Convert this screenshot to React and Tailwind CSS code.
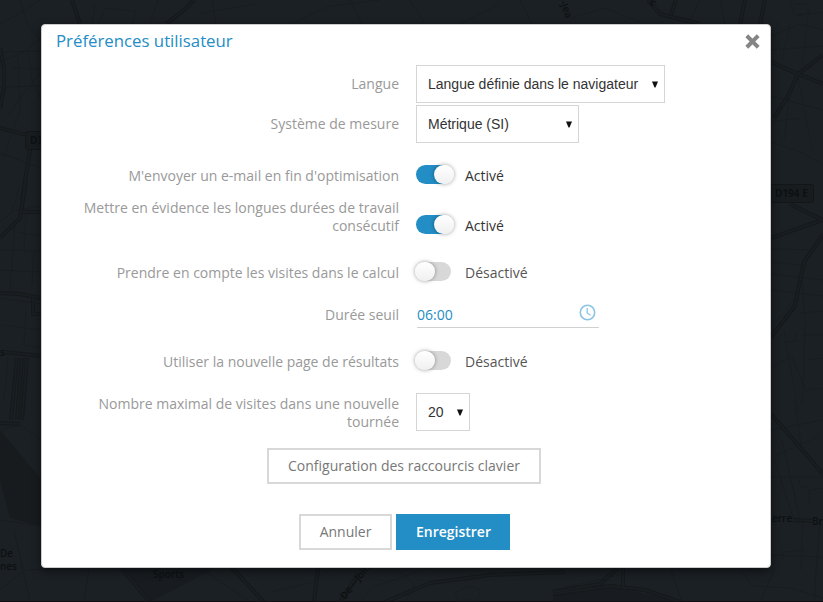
import { useState } from 'react'
import { clsx } from 'clsx'

const MINOR_ROADS = [
  'M0 24 L22 12 L40 0', 'M20 0 L28 26 L41 40', 'M0 62 L24 52 L41 38', 'M0 52 L41 51', 'M12 68 L41 69',
  'M0 87 L41 86', 'M8 115 L25 92 L41 72', 'M18 54 L20 110 L14 128', 'M28 52 L32 80 L41 100', 'M0 153 L41 168',
  'M12 132 L4 158', 'M0 222 L12 212 L20 185', 'M12 211 L41 206', 'M18 232 L41 236', 'M0 250 L41 251', 'M0 270 L41 272',
  'M15 222 L10 290', 'M26 212 L24 250', 'M34 250 L32 285', 'M0 298 L41 304', 'M2 325 L41 330', 'M26 310 L24 345 L41 348',
  'M8 355 L4 400', 'M95 4 L92 24', 'M98 24 L106 8 L136 12 L132 24', 'M150 24 L158 0', 'M198 14 L255 4', 'M212 0 L216 24',
  'M290 24 L330 6 L380 0', 'M350 0 L362 24', 'M410 0 L425 24', 'M460 24 L500 4', 'M520 0 L532 24', 'M570 18 L605 8 L640 22',
  'M690 20 L700 0', 'M720 0 L725 24', 'M790 0 L795 16 L823 12', 'M795 4 L808 4 L808 14 L797 14', 'M771 50 L823 46',
  'M771 36 L800 24 L823 30', 'M790 24 L782 60', 'M808 16 L802 66', 'M771 96 L823 110', 'M798 76 L812 150', 'M790 90 L784 140',
  'M771 142 L800 152 L823 164', 'M771 122 L800 118', 'M771 249 L815 250', 'M771 262 L810 266', 'M771 274 L823 280', 'M771 290 L823 296',
  'M771 326 L784 314 L800 290', 'M784 330 L798 412', 'M802 280 L805 320 L803 400 L795 412', 'M771 367 L792 357 L806 390 L823 388',
  'M800 313 L823 311', 'M803 335 L823 335', 'M806 360 L823 358', 'M784 342 L796 341 L796 333', 'M794 400 L802 450',
  'M771 430 L823 420', 'M776 455 L820 436', 'M771 477 L823 477', 'M798 478 L801 487 L808 487', 'M809 505 L809 490 L823 488',
  'M782 440 L800 520', 'M774 460 L794 520', 'M771 555 L823 557', 'M782 560 L783 552 L806 550', 'M803 520 L801 570', 'M820 520 L814 602',
  'M0 520 L41 526', 'M14 530 L30 602', 'M0 590 L25 570 L80 568', 'M89 568 L84 602', 'M200 568 L250 602', 'M270 592 L315 582 L330 568',
  'M360 602 L375 586 L400 578 L430 568', 'M395 568 L415 585 L405 602', 'M455 592 L470 586 L480 590 L478 600 L458 600 Z',
  'M553 590 L620 575', 'M670 568 L682 602', 'M740 568 L752 586 L790 588 L823 598', 'M775 568 L760 602', 'M0 430 L20 425 L41 440',
]

const MAJOR_ROADS = [
  'M72 0 L80 24', 'M166 24 L184 10 L194 0', 'M0 48 L4 68 L4 88 L0 108', 'M0 128 L30 136', 'M30 150 L22 200',
  'M26 180 L20 218 L0 238', 'M22 212 L41 212', 'M0 293 L20 294 L41 298', 'M33 298 L33 314 L41 314', 'M5 352 L41 356',
  'M17 358 L11 420', 'M22 358 L17 420', 'M27 358 L22 420', 'M0 423 L20 424', 'M648 0 L660 14 L700 24',
  'M671 14 L676 0', 'M740 24 L745 0', 'M760 24 L765 0', 'M771 62 L798 74 L823 84', 'M823 55 L798 74 L788 96 L774 118',
  'M790 204 L823 220 L771 238', 'M823 235 L804 262 L797 295 L795 306 L771 337', 'M771 414 L823 474', 'M793 520 L812 521',
  'M121 568 L150 602', 'M232 568 L264 602', 'M318 568 L314 602', 'M385 602 L430 583 L490 575 L565 572',
  'M618 568 L600 584 L553 592', 'M623 568 L623 588', 'M553 594 L610 586 L645 590 L680 602', 'M358 574 L340 602',
]

const MapBackdrop = () => (
  <svg className="absolute inset-0 h-full w-full" viewBox="0 0 823 602" fill="none">
    <rect width="823" height="602" fill="#1b2024" />
    <path d="M0 430 L41 479 L41 526 L10 518 L0 480 Z" fill="#171b1e" />
    <path d="M150 602 L215 568 L125 568 Z M553 594 L610 586 L680 602 H553 Z" fill="#181c20" />
    <g stroke="#181d20" strokeWidth="1">
      {MINOR_ROADS.map(d => <path key={d} d={d} />)}
    </g>
    <g strokeLinejoin="round">
      {MAJOR_ROADS.map(d => <path key={d} d={d} stroke="#15191c" strokeWidth="4" />)}
      {MAJOR_ROADS.map(d => <path key={`${d}-in`} d={d} stroke="#191e21" strokeWidth="2" />)}
    </g>
    <rect x="25.500" y="131.500" width="40" height="18" rx="2" fill="#181c1f" stroke="#131619" />
    <rect x="765.500" y="184.500" width="48" height="18" rx="2" fill="#181c1f" stroke="#131619" />
    <g fill="#0d1012" className="font-['Open_Sans',sans-serif] text-[10px] font-semibold">
      <text x="30" y="144" className="font-bold">D3</text>
      <text x="775" y="197" className="font-bold">D194 E</text>
      <text x="0" y="557">De</text>
      <text x="0" y="570">nes</text>
      <text x="153" y="578">Sports</text>
      <text x="772" y="522">erre</text>
      <text x="812" y="525">Br</text>
      <text x="0" y="356">s</text>
      <text transform="translate(345 600) rotate(-52)">De—Join</text>
      <text transform="translate(560 2) rotate(70)">-Jea</text>
      <text transform="translate(649 3) rotate(45)">c</text>
    </g>
    <path d="M0 601.500 H823" stroke="#120f16" />
  </svg>
)

const Row = ({ label, className, labelClassName, children }) => (
  <div className={clsx('flex', className)}>
    <label className={clsx('w-[342px] shrink-0 text-right text-[14px] leading-[18px] text-[#999]', labelClassName)}>{label}</label>
    <div className="ml-[17px] flex items-center">{children}</div>
  </div>
)

const SelectBox = ({ value, className }) => (
  <button type="button" className={clsx("flex h-[38px] items-center justify-between border border-[#d5d5d5] bg-white pl-[11px] pr-[6px] font-['Liberation_Sans',Arial,sans-serif] text-[14px] text-[#333]", className)}>
    <span className="whitespace-nowrap">{value}</span>
    <svg width="6" height="7" viewBox="0 0 6 7" className="shrink-0"><path d="M0 0.500 H6 L3.500 6.500 H2.500 Z" fill="#111" /></svg>
  </button>
)

const Toggle = ({ initial }) => {
  const [on, setOn] = useState(initial)
  return (
    <>
      <button type="button" role="switch" aria-checked={on} onClick={() => setOn(!on)}
        className={clsx('-mt-[4px] flex h-[19px] w-[35px] items-center rounded-full', on ? 'justify-end bg-[#238dc5]' : 'bg-[#d8d8d8]')}>
        <span className={clsx('h-[19px] w-[20px] shrink-0 rounded-full bg-linear-to-b from-white to-[#f0f0f0] shadow-[0_0_4px_rgba(0,0,0,0.4)]', on ? '-mr-[3px]' : '-ml-[1px]')} />
      </button>
      <span className={clsx('ml-[14px] text-[14px] leading-[18px]', on ? 'text-[#333]' : 'text-[#555]')}>{on ? 'Activé' : 'Désactivé'}</span>
    </>
  )
}

export default function App() {
  return (
    <div className="relative h-[602px] w-[823px] overflow-hidden bg-[#1b2024] font-['Open_Sans',sans-serif]">
      <MapBackdrop />
      <div className="relative mt-[24px] ml-[41px] h-[544px] w-[730px] rounded-[4px] border border-[#ccc] bg-white pr-[10px] pl-[15px] shadow-[0_3px_9px_rgba(0,0,0,0.5)]">
        <div className="flex h-[40px] items-start justify-between">
          <h1 className="-ml-[1px] pt-[4px] text-[16.8px] leading-[24px] text-[#238dc5]">Préférences utilisateur</h1>
          <button type="button" aria-label="Fermer" className="mt-[9px]">
            <svg width="15" height="15" viewBox="0 0 15 15"><path d="M3.200 3.200 L11.800 11.800 M11.800 3.200 L3.200 11.800" stroke="#858585" strokeWidth="4" strokeLinecap="square" /></svg>
          </button>
        </div>

        <Row label="Langue" className="items-center"><SelectBox value="Langue définie dans le navigateur" className="w-[249px]" /></Row>
        <Row label="Système de mesure" className="mt-[2px] items-center"><SelectBox value="Métrique (SI)" className="w-[163px]" /></Row>
        <Row label="M'envoyer un e-mail en fin d'optimisation" className="mt-[15px] h-[36px] items-center"><Toggle initial={true} /></Row>
        <Row label="Mettre en évidence les longues durées de travail consécutif" className="mt-[5px] h-[36px] items-end"><Toggle initial={true} /></Row>
        <Row label="Prendre en compte les visites dans le calcul" className="mt-[20px] h-[36px] items-center"><Toggle initial={false} /></Row>
        <Row label="Durée seuil" className="mt-[6px] h-[36px] items-center">
          <div className="ml-[1px] flex h-[26px] w-[182px] items-center justify-between border-b border-[#d0d0d0] pr-[3px]">
            <span className="text-[14px] text-[#238dc5]">06:00</span>
            <svg width="17" height="17" viewBox="0 0 17 17" fill="none" stroke="#8cc5e4" className="-mt-[5px]">
              <circle cx="8.500" cy="8.500" r="7.200" strokeWidth="1.600" />
              <path d="M8.200 4 V9 L11.500 11.200" strokeWidth="1.300" />
            </svg>
          </div>
        </Row>
        <Row label="Utiliser la nouvelle page de résultats" className="mt-[11px] h-[36px] items-center"><Toggle initial={false} /></Row>
        <Row label="Nombre maximal de visites dans une nouvelle tournée" className="mt-[13px] items-center" labelClassName="pt-[2px]"><SelectBox value="20" className="w-[54px]" /></Row>

        <div className="mt-[17px] ml-[210px] flex">
          <button type="button" className="h-[36px] w-[274px] border-2 border-[#d8d8d8] pb-[2px] text-[14px] text-[#777]">Configuration des raccourcis clavier</button>
        </div>
        <div className="mt-[30px] ml-[242px] flex gap-[4px]">
          <button type="button" className="h-[36px] w-[93px] border-2 border-[#d8d8d8] pb-[2px] text-[14px] text-[#777]">Annuler</button>
          <button type="button" className="h-[36px] w-[114px] bg-[#238dc5] pb-[2px] pl-[1px] text-[14px] font-semibold text-white">Enregistrer</button>
        </div>
      </div>
    </div>
  )
}
